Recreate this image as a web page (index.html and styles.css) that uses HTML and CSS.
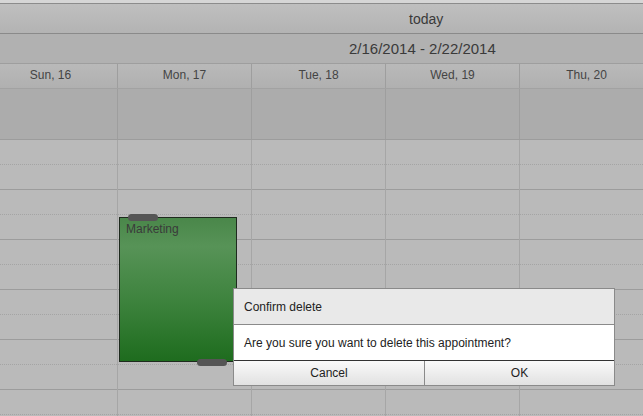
FILE: index.html
```html
<!DOCTYPE html>
<html>
<head>
<meta charset="utf-8">
<link rel="stylesheet" href="styles.css">
</head>
<body>
<div class="scheduler">
  <div class="topline"></div>
  <div class="toolbar"><span class="today">today</span></div>
  <div class="range"><span class="range-text">2/16/2014 - 2/22/2014</span></div>
  <div class="cols days">
    <div class="cell">Sun, 16</div>
    <div class="cell">Mon, 17</div>
    <div class="cell">Tue, 18</div>
    <div class="cell">Wed, 19</div>
    <div class="cell">Thu, 20</div>
  </div>
  <div class="cols allday">
    <div class="cell"></div><div class="cell"></div><div class="cell"></div><div class="cell"></div><div class="cell"></div>
  </div>
  <div class="grid">
    <div class="slots">
      <div class="slot half"></div><div class="slot full"></div>
      <div class="slot half"></div><div class="slot full"></div>
      <div class="slot half"></div><div class="slot full"></div>
      <div class="slot half"></div><div class="slot full"></div>
      <div class="slot half"></div><div class="slot full"></div>
      <div class="slot half"></div><div class="slot full"></div>
    </div>
    <div class="cols vlines">
      <div class="cell"></div><div class="cell"></div><div class="cell"></div><div class="cell"></div><div class="cell"></div>
    </div>
  </div>

  <div class="event">
    <span class="handle handle-top"></span>
    <span class="event-title">Marketing</span>
    <span class="handle handle-bottom"></span>
  </div>

  <div class="dialog">
    <div class="dialog-head">Confirm delete</div>
    <div class="dialog-body">Are you sure you want to delete this appointment?</div>
    <div class="dialog-buttons">
      <div class="btn">Cancel</div>
      <div class="btn">OK</div>
    </div>
  </div>
</div>
</body>
</html>
```

FILE: styles.css
```css
html, body {
  margin: 0;
  padding: 0;
  width: 643px;
  height: 416px;
  overflow: hidden;
  background: #bababa;
  font-family: "Liberation Sans", Arial, sans-serif;
}

.scheduler {
  position: relative;
  width: 643px;
  height: 416px;
  overflow: hidden;
}

.topline {
  height: 3px;
  background: #d6d6d6;
  border-bottom: 1px solid #8c8c8c;
}

.toolbar {
  height: 29px;
  background: linear-gradient(#bfbfbf, #b3b3b3);
  border-bottom: 1px solid #8a8a8a;
  display: flex;
  align-items: center;
  padding-left: 409px;
  font-size: 14px;
  color: #3a3a3a;
}

.range {
  height: 29px;
  background: #b1b1b1;
  border-bottom: 1px solid #9e9e9e;
  display: flex;
  align-items: center;
  padding-left: 349px;
  font-size: 15px;
  color: #3a3a3a;
}

.cols {
  display: grid;
  grid-template-columns: repeat(5, 134px);
  margin-left: -16px;
}

.cols .cell {
  border-right: 1px solid #9e9e9e;
}

.days {
  height: 24px;
  background: linear-gradient(#b9b9b9, #b0b0b0);
  border-bottom: 1px solid #a2a2a2;
  font-size: 12px;
  color: #444;
}

.days .cell {
  display: flex;
  align-items: center;
  justify-content: center;
  padding-bottom: 2px;
}

.allday {
  height: 50px;
  background: #acacac;
  border-bottom: 1px solid #9c9c9c;
}

.grid {
  position: relative;
  height: 280px;
}

.slot {
  height: 24px;
}

.slot.half {
  border-bottom: 1px dotted #a4a4a4;
}

.slot.full {
  border-bottom: 1px solid #9c9c9c;
}

.vlines {
  position: absolute;
  top: 0;
  left: 0;
  bottom: 0;
}

.vlines .cell {
  border-right-color: #a6a6a6;
}

.event {
  position: absolute;
  left: 119px;
  top: 217px;
  width: 116px;
  height: 143px;
  border: 1px solid #1e2a1e;
  background: linear-gradient(#4a874a 0%, #579357 20%, #3c823c 60%, #1e6c1e 100%);
}

.event-title {
  display: block;
  padding: 4px 0 0 6px;
  font-size: 12px;
  color: #3a3a3a;
}

.handle {
  position: absolute;
  width: 30px;
  height: 7px;
  border-radius: 4px;
  background: #555;
}

.handle-top {
  left: 8px;
  top: -4px;
}

.handle-bottom {
  left: 77px;
  bottom: -5px;
}

.dialog {
  position: absolute;
  left: 233px;
  top: 288px;
  width: 380px;
  border: 1px solid #8a8a8a;
  font-size: 12px;
  color: #222;
}

.dialog-head {
  height: 35px;
  background: #e9e9e9;
  border-bottom: 1px solid #8a8a8a;
  display: flex;
  align-items: center;
  padding-left: 10px;
}

.dialog-body {
  height: 35px;
  background: #fff;
  border-bottom: 1px solid #333;
  display: flex;
  align-items: center;
  padding-left: 10px;
}

.dialog-buttons {
  display: grid;
  grid-template-columns: 190px 190px;
  height: 24px;
}

.btn {
  display: flex;
  align-items: center;
  justify-content: center;
  background: linear-gradient(#fafafa, #e1e1e1);
}

.btn + .btn {
  border-left: 1px solid #8a8a8a;
}
```
